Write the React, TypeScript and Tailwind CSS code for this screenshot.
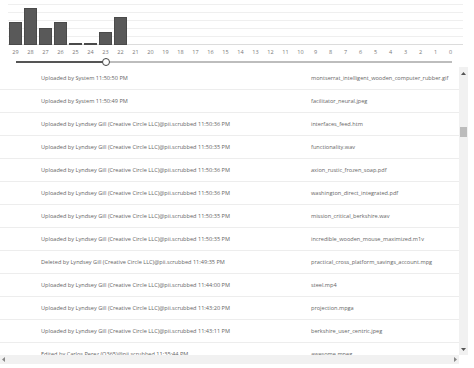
import React from "react";

const labels = Array.from({ length: 30 }, (_, i) => 29 - i);

// bar heights in px, keyed by day label
const bars: Record<number, number> = {
  29: 23,
  28: 37,
  27: 17,
  26: 23,
  25: 2,
  24: 1,
  23: 13,
  22: 28,
};

const system = "Uploaded by System";
const lyndsey = "Uploaded by Lyndsey Gill (Creative Circle LLC)@pii.scrubbed";

const rows = [
  { who: `${system} 11:50:50 PM`, file: "montserrat_intelligent_wooden_computer_rubber.gif" },
  { who: `${system} 11:50:49 PM`, file: "facilitator_neural.jpeg" },
  { who: `${lyndsey} 11:50:36 PM`, file: "interfaces_feed.htm" },
  { who: `${lyndsey} 11:50:35 PM`, file: "functionality.wav" },
  { who: `${lyndsey} 11:50:36 PM`, file: "axion_rustic_frozen_soap.pdf" },
  { who: `${lyndsey} 11:50:36 PM`, file: "washington_direct_integrated.pdf" },
  { who: `${lyndsey} 11:50:35 PM`, file: "mission_critical_berkshire.wav" },
  { who: `${lyndsey} 11:50:35 PM`, file: "incredible_wooden_mouse_maximized.m1v" },
  {
    who: "Deleted by Lyndsey Gill (Creative Circle LLC)@pii.scrubbed 11:49:35 PM",
    file: "practical_cross_platform_savings_account.mpg",
  },
  { who: `${lyndsey} 11:44:00 PM`, file: "steel.mp4" },
  { who: `${lyndsey} 11:43:20 PM`, file: "projection.mpga" },
  { who: `${lyndsey} 11:43:11 PM`, file: "berkshire_user_centric.jpeg" },
  { who: "Edited by Carlos Perez (O365)@pii.scrubbed 11:35:44 PM", file: "awesome.mpeg" },
];

function Chart() {
  return (
    <div className="h-[67px] pt-[4px]">
      <div className="relative ml-[8px] w-[455px] h-[41px]">
        <div className="flex flex-col justify-between h-full">
          {[0, 1, 2, 3, 4, 5].map((i) => (
            <div key={i} className={`h-px ${i === 5 ? "bg-[#dcdcdc]" : "bg-[#efefef]"}`} />
          ))}
        </div>
        <div className="absolute inset-0 flex items-end">
          {labels.map((l) => (
            <div key={l} className="w-[15px] flex justify-center">
              {bars[l] ? (
                <div
                  className="w-[13px] bg-[#595959] border border-[#4a4a4a]"
                  style={{ height: bars[l] }}
                />
              ) : null}
            </div>
          ))}
        </div>
      </div>
      <div className="flex ml-[8px] mt-[3px] h-[8px]">
        {labels.map((l) => (
          <div key={l} className="w-[15px] text-center text-[5.5px] leading-[8px] text-[#777]">
            {l}
          </div>
        ))}
      </div>
      <div className="relative ml-[16px] w-[436px] h-[10px] mt-[1px] flex items-center">
        <div className="h-[2px] w-[90px] bg-[#555]" />
        <div className="h-[2px] flex-1 bg-[#bdbdbd]" />
        <div className="absolute left-[86px] top-[1px] w-[8px] h-[8px] rounded-full bg-white border border-[#444]" />
      </div>
    </div>
  );
}

function VScroll() {
  return (
    <div className="w-[9px] bg-[#f1f1f1] flex flex-col items-center">
      <div className="h-[12px] flex items-center justify-center">
        <svg width="5" height="3" viewBox="0 0 5 3">
          <path d="M0 3 L2.5 0 L5 3 Z" fill="#555" />
        </svg>
      </div>
      <div className="flex-1 w-full px-[1px]">
        <div className="mt-[48px] h-[10px] w-full bg-[#bcbcbc]" />
      </div>
      <div className="h-[12px] flex items-center justify-center">
        <svg width="5" height="3" viewBox="0 0 5 3">
          <path d="M0 0 L5 0 L2.5 3 Z" fill="#555" />
        </svg>
      </div>
    </div>
  );
}

export default function App() {
  return (
    <div
      className="w-[474px] h-[368px] bg-white overflow-hidden text-[#666]"
      style={{ fontFamily: '"Open Sans", "Liberation Sans", sans-serif' }}
    >
      <Chart />
      <div className="flex h-[288px]">
        <div className="w-[459px] overflow-hidden">
          {rows.map((r, i) => (
            <div
              key={i}
              className="h-[23px] flex items-center border-b border-[#ededed] text-[5.6px] whitespace-nowrap"
            >
              <div className="w-[311px] pl-[41px]">{r.who}</div>
              <div>{r.file}</div>
            </div>
          ))}
        </div>
        <VScroll />
      </div>
      <div className="w-[459px] h-[9px] bg-[#f1f1f1] flex items-center justify-between px-[2px]">
        <svg width="3" height="5" viewBox="0 0 3 5">
          <path d="M3 0 L0 2.5 L3 5 Z" fill="#888" />
        </svg>
        <svg width="3" height="5" viewBox="0 0 3 5">
          <path d="M0 0 L3 2.5 L0 5 Z" fill="#888" />
        </svg>
      </div>
    </div>
  );
}
